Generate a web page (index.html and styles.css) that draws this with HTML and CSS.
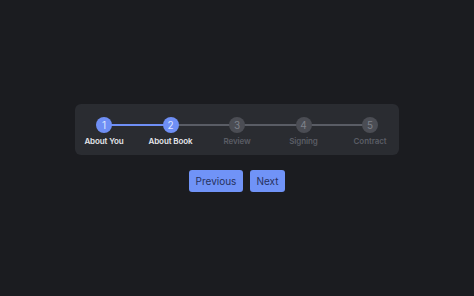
FILE: index.html
```html
<!DOCTYPE html>
<html>
<head>
<meta charset="utf-8">
<link rel="stylesheet" href="styles.css">
</head>
<body>
<main class="page">
  <div class="stepper">
    <div class="step done line-done"><span class="dot">1</span><span class="label">About You</span></div>
    <div class="step done"><span class="dot">2</span><span class="label">About Book</span></div>
    <div class="step"><span class="dot">3</span><span class="label">Review</span></div>
    <div class="step"><span class="dot">4</span><span class="label">Signing</span></div>
    <div class="step last"><span class="dot">5</span><span class="label">Contract</span></div>
  </div>
  <div class="actions">
    <button class="btn">Previous</button>
    <button class="btn">Next</button>
  </div>
</main>
</body>
</html>
```
FILE: styles.css
```css
* { box-sizing: border-box; }
html, body { margin: 0; height: 100%; }
body {
  background: #1b1c20;
  font-family: "Inter", "Open Sans", sans-serif;
}
.page {
  min-height: 100vh;
  display: flex;
  flex-direction: column;
  align-items: center;
  justify-content: center;
  gap: 15px;
}
.stepper {
  width: 324px;
  height: 51px;
  background: #2a2c31;
  border-radius: 6px;
  display: flex;
  justify-content: space-between;
  align-items: flex-start;
  padding: 13px 4px 0;
}
.step {
  position: relative;
  width: 50px;
  display: flex;
  flex-direction: column;
  align-items: center;
  gap: 3px;
}
.step::after {
  content: "";
  position: absolute;
  left: 25px;
  top: 7px;
  width: 66.5px;
  height: 2px;
  background: #5a5d65;
  z-index: 0;
}
.step.line-done::after { background: #6f8ff5; }
.step.last::after { display: none; }
.dot {
  position: relative;
  z-index: 1;
  width: 16px;
  height: 16px;
  border-radius: 50%;
  background: #4b4d54;
  color: #7e818a;
  font-size: 10px;
  line-height: 16px;
  text-align: center;
}
.step.done .dot {
  background: #6f8ff5;
  color: #dfe6ff;
}
.label {
  font-size: 8px;
  font-weight: 600;
  color: #5a5d65;
  white-space: nowrap;
  line-height: 10px;
  letter-spacing: -0.1px;
}
.step.done .label { color: #e6e7ec; }
.actions {
  display: flex;
  gap: 7px;
}
.btn {
  height: 22px;
  border: none;
  border-radius: 3px;
  background: #7093f7;
  color: #26315e;
  font-family: inherit;
  font-size: 10px;
  padding: 0 6.5px;
}
```
